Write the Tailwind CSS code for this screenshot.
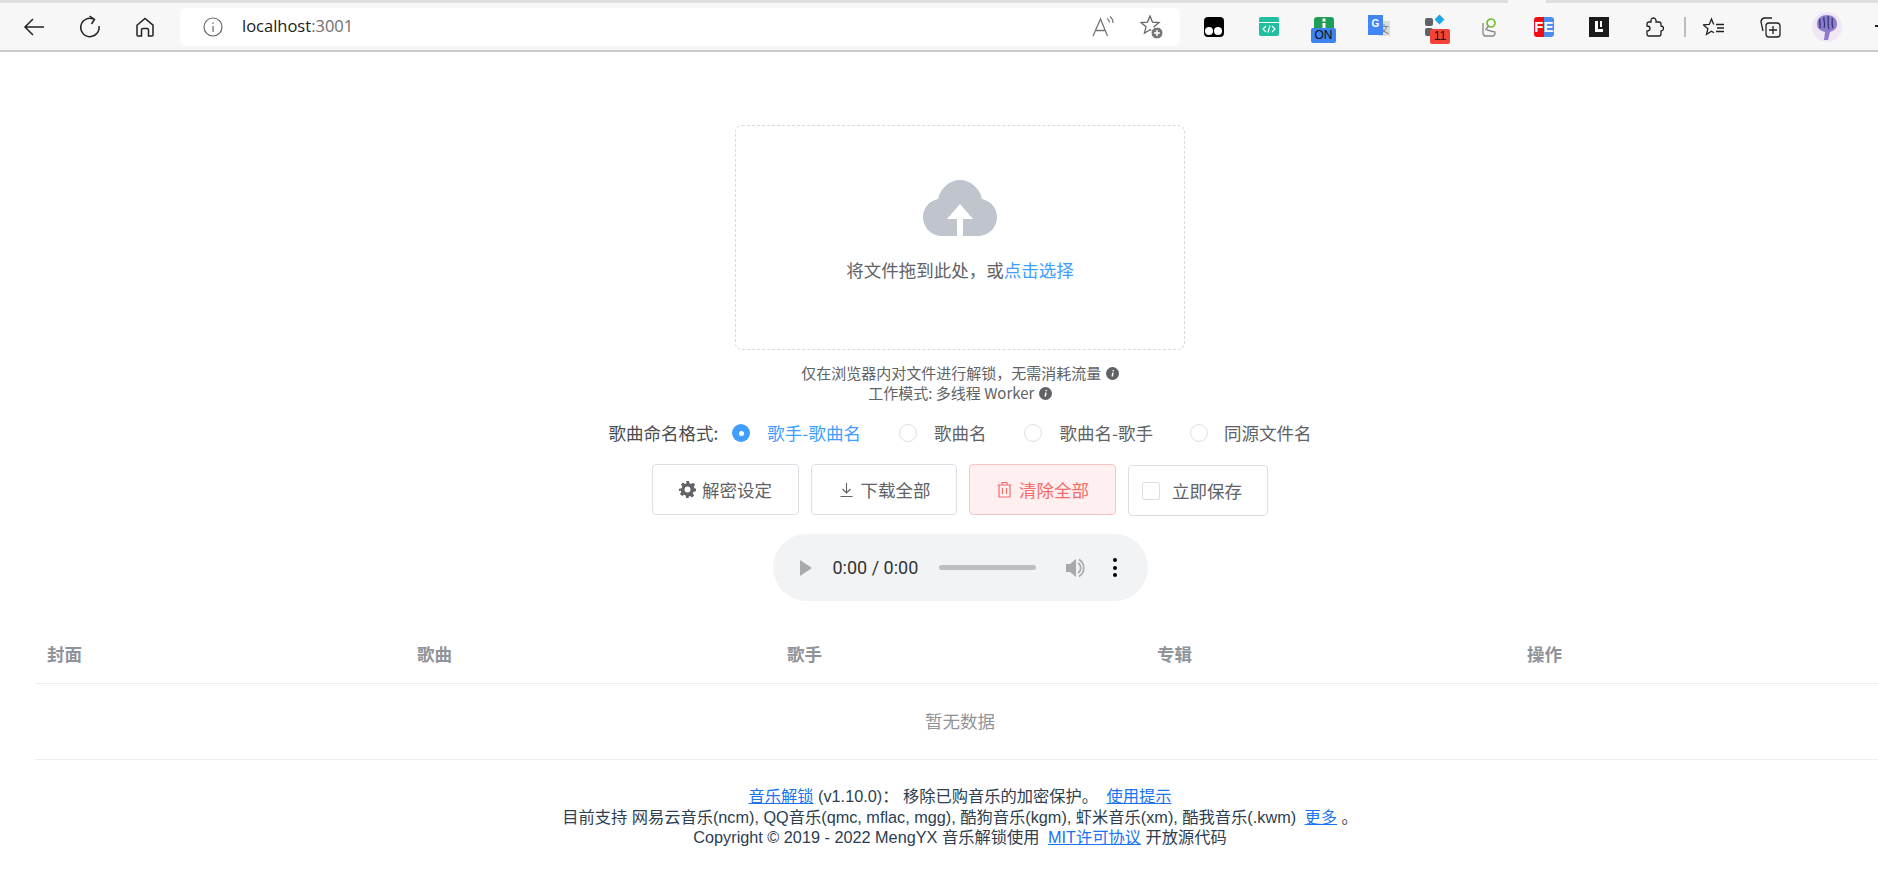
<!DOCTYPE html>
<html lang="zh-CN">
<head>
  <meta charset="UTF-8" />
  <title>音乐解锁</title>
  <script src="https://cdn.jsdelivr.net/npm/@tailwindcss/browser@4"></script>
</head>
<body class="w-[1878px] h-[887px] overflow-hidden bg-white font-['Noto_Sans_CJK_SC',sans-serif] text-[#606266]">
  <!-- browser chrome -->
  <header class="h-[52px] bg-[#f7f7f7] border-b-2 border-[#c9c9c9] flex flex-col relative">
    <div class="h-[3px] flex shrink-0">
      <div class="w-[1508px] bg-[#dedede]"></div>
      <div class="w-[38px]"></div>
      <div class="flex-1 bg-[#dedede]"></div>
    </div>
    <div class="flex-1 flex items-center text-[#222]">
      <button class="w-[34px] ml-[17px] flex justify-center">
        <svg width="24" height="24" viewBox="0 0 24 24" fill="none" stroke="#222" stroke-width="1.5"><path d="M22 12H3M11 4l-8 8 8 8"/></svg>
      </button>
      <button class="w-[34px] ml-[22px] flex justify-center">
        <svg width="24" height="24" viewBox="0 0 24 24" fill="none" stroke="#222" stroke-width="1.5"><path d="M16 4.200A9.200 9.200 0 1 0 21 11"/><path d="M11.500 1l5 3.400-3 4.600"/></svg>
      </button>
      <button class="w-[34px] ml-[21px] flex justify-center">
        <svg width="22" height="22" viewBox="0 0 22 22" fill="none" stroke="#222" stroke-width="1.5"><path d="M3 9.200L11 2.500l8 6.700V19a1 1 0 0 1-1 1h-3.500v-6a1.500 1.500 0 0 0-1.500-1.500H9A1.500 1.500 0 0 0 7.500 14v6H4a1 1 0 0 1-1-1z"/></svg>
      </button>
      <div class="ml-[18px] w-[1000px] h-[38px] bg-white rounded-[6px] flex items-center pl-[23px] pr-[16px]">
        <svg width="20" height="20" viewBox="0 0 20 20" fill="none" stroke="#666" stroke-width="1.2"><circle cx="10" cy="10" r="9"/><path d="M10 9v6M10 5.500v1.500"/></svg>
        <span class="ml-[19px] font-['Open_Sans',sans-serif] text-[16.500px] text-[#222]">localhost<span class="text-[#707070]">:3001</span></span>
        <div class="ml-auto flex items-center gap-[26px]">
          <svg width="22" height="22" viewBox="0 0 22 22" fill="none" stroke="#777" stroke-width="1.3"><path d="M1 20L8.500 3l7 17M4 14.500h9.500M15 2.500a5 5 0 0 1 2.500 4M18 .5a8 8 0 0 1 3 6.500"/></svg>
          <svg width="24" height="24" viewBox="0 0 24 24" fill="none" stroke="#666" stroke-width="1.300"><path d="M10 1L12.470 7.100 19.030 7.560 14 11.800 15.580 18.190 10 14.700 4.420 18.190 6 11.800 .97 7.560 7.530 7.100z"/><circle cx="17" cy="18" r="6" fill="#777" stroke="#fff" stroke-width="1"/><path d="M17 15v6M14 18h6" stroke="#fff" stroke-width="1.500"/></svg>
        </div>
      </div>
      <div class="ml-[6px] flex items-center">
        <div class="w-[55px] flex justify-center">
          <div class="w-[20px] h-[20px] bg-black rounded-[4px] flex items-end justify-center gap-px pb-[2px]"><span class="w-[8px] h-[8px] rounded-full bg-white"></span><span class="w-[8px] h-[8px] rounded-full bg-white"></span></div>
        </div>
        <div class="w-[55px] flex justify-center">
          <svg width="20" height="19" viewBox="0 0 20 19"><rect width="20" height="19" rx="2" fill="#1fbf9f"/><path d="M0 5.500h20" stroke="#f7f7f7"/><path d="M7 9l-3 3 3 3M13 9l3 3-3 3M11 8.500l-2 7" stroke="#fff" fill="none" stroke-width="1.200"/></svg>
        </div>
        <div class="w-[55px] flex justify-center relative h-[30px] pt-[5px]">
          <svg width="20" height="14" viewBox="0 0 20 14"><path d="M3 0h14a3 3 0 0 1 3 3v11H0V3a3 3 0 0 1 3-3z" fill="#1e9e56"/><path d="M8.500 6h3v8h-3zM8.500 1.500h3v3h-3z" fill="#fff"/></svg>
          <span class="absolute left-[15px] top-[16px] w-[25px] h-[15px] rounded-[2px] bg-[#3f83f0] text-[#111] text-[12px] leading-[15px] text-center font-['Liberation_Sans',sans-serif]">ON</span>
        </div>
        <div class="w-[55px] flex justify-center relative h-[24px]">
          <span class="absolute left-[27px] top-[6px] w-[12px] h-[15px] bg-[#dcdcdc] text-[#777] text-[10px] leading-[15px] text-center">文</span>
          <span class="absolute left-[17px] top-0 w-[15px] h-[20px] bg-[#4285f4] text-white text-[10px] leading-[17px] text-center font-bold font-['Liberation_Sans',sans-serif]">G</span>
        </div>
        <div class="w-[55px] flex justify-center relative h-[30px]">
          <div class="w-[20px] h-[24px] relative">
            <span class="absolute left-[1px] top-[6px] w-[8px] h-[8px] rounded-[2px] bg-[#5f6368]"></span>
            <span class="absolute left-[1px] top-[16px] w-[8px] h-[8px] rounded-[2px] bg-[#5f6368]"></span>
            <span class="absolute left-[12px] top-[4px] w-[7px] h-[7px] rotate-45 bg-[#1ea7e8]"></span>
          </div>
          <span class="absolute left-[24px] top-[17px] w-[20px] h-[15px] rounded-[2px] bg-[#f44336] text-[#111] text-[12px] leading-[15px] text-center font-['Liberation_Sans',sans-serif]">11</span>
        </div>
        <div class="w-[55px] flex justify-center">
          <svg width="16" height="20" viewBox="0 0 16 20" fill="none"><circle cx="10" cy="6" r="4" stroke="#6fbf2f" stroke-width="1.700"/><path d="M7.500 9L4.500 13M2 6v11l1.500 2h9l1.500-2v-2L6 13" stroke="#888" stroke-width="1.300"/></svg>
        </div>
        <div class="w-[55px] flex justify-center">
          <div class="w-[20px] h-[20px] rounded-[3px] overflow-hidden flex font-['Liberation_Sans',sans-serif] font-bold text-white text-[15px] leading-[20px]"><span class="w-[10px] bg-[#f00f14] text-right">F</span><span class="w-[10px] bg-[#4a8ff0] text-left">E</span></div>
        </div>
        <div class="w-[55px] flex justify-center">
          <div class="w-[20px] h-[20px] bg-[#1b1b1b] flex items-center justify-center"><svg width="10" height="11" viewBox="0 0 10 11" fill="#fff"><path d="M1 0h3v8h5v3H1zM6 0h2v6H6z"/></svg></div>
        </div>
        <div class="w-[55px] flex justify-center">
          <svg width="20" height="20" viewBox="0 0 20 20" fill="none" stroke="#222" stroke-width="1.300"><path d="M7 3.500C7 1.500 8.500 1 9.500 1S12 2 12 3.500V5h3c1 0 2 1 2 2v2c2 0 2.500 1.500 2.500 2.500S18.500 14 17 14v3c0 1-1 2-2 2H5c-1 0-2-1-2-2v-3c1.500 0 3-1 3-2.500S4.500 9 3 9V7c0-1 1-2 2-2h2z"/></svg>
        </div>
        <span class="ml-[3px] w-[2px] h-[20px] bg-[#bdbdbd]"></span>
        <div class="w-[55px] flex justify-center">
          <svg width="22" height="20" viewBox="0 0 22 20" fill="none" stroke="#222" stroke-width="1.300"><path d="M10.700 7.400L8.500 2 6.300 7.400 .4 7.900 4.900 11.700 3.500 17.400 8.500 14.300 11 15.800M13 7.500h8M14 11h7M13 14.500h8"/></svg>
        </div>
        <div class="w-[55px] flex justify-center ml-[1px]">
          <svg width="22" height="22" viewBox="0 0 22 22" fill="none" stroke="#222" stroke-width="1.300"><path d="M13 2H5a4 4 0 0 0-3 4l2 9"/><rect x="7" y="7" width="14" height="14" rx="3"/><path d="M14 10v8M10 14h8"/></svg>
        </div>
        <div class="w-[55px] flex justify-center ml-[2px]">
          <svg width="30" height="30" viewBox="0 0 30 30" fill="none"><circle cx="15" cy="15" r="15" fill="#efe6f6"/><path d="M5 12c0-6 5-9 10-9s10 3 10 9c0 5-4 7-7 8l-2 8h-4l1-8c-4-1-8-3-8-8z" fill="#8d7ccc"/><path d="M8 7c-1 4 1 6 0 9M12 5c-1 4 2 7 0 11M16 4c1 4-1 8 1 13M20 6c1 4-1 6 1 10" stroke="#2f2f70" stroke-width="1.200"/></svg>
        </div>
      </div>
    </div>
    <span class="absolute right-[0px] top-[25px] w-[3px] h-[2px] bg-[#222]"></span>
  </header>

  <main class="w-[1920px] flex flex-col items-center pt-[73px]">
    <div class="w-[450px] h-[225px] border border-dashed border-[#d9d9d9] rounded-[7px] flex flex-col items-center">
      <svg class="mt-[54px]" width="74" height="56" viewBox="0 0 74 56">
        <path d="M19 56C8 56 0 47 0 37c0-9 6-16 15-18C17 8 27 0 37 0s20 8 22 19c9 2 15 9 15 18 0 10-8 19-19 19z" fill="#c0c4cc"/>
        <path d="M37 24l13 15h-10v17h-6V39H24z" fill="#fff"/>
      </svg>
      <div class="mt-[19px] text-[17.500px] leading-[29px]">将文件拖到此处，或<span class="text-[#409eff]">点击选择</span></div>
    </div>

    <div class="mt-[13px] text-[15px] leading-[20px] text-center">
      <div>仅在浏览器内对文件进行解锁，无需消耗流量 <svg class="inline align-[-1px] ml-[1px]" width="13" height="13" viewBox="0 0 13 13"><circle cx="6.500" cy="6.500" r="6.500" fill="#606266"/><path d="M7 5.500l-.8 4M7.300 3v1.200" stroke="#fff" stroke-width="1.500"/></svg></div>
      <div>工作模式: 多线程 Worker <svg class="inline align-[-1px] ml-[1px]" width="13" height="13" viewBox="0 0 13 13"><circle cx="6.500" cy="6.500" r="6.500" fill="#606266"/><path d="M7 5.500l-.8 4M7.300 3v1.200" stroke="#fff" stroke-width="1.500"/></svg></div>
    </div>

    <div class="mt-[18px] flex items-center text-[17.500px] leading-[24px] h-[24px]">
      <span class="text-[#4a4c50]">歌曲命名格式:</span>
      <span class="ml-[14px] w-[18px] h-[18px] rounded-full bg-[#409eff] flex items-center justify-center"><span class="w-[5px] h-[5px] rounded-full bg-white"></span></span>
      <span class="ml-[17px] text-[#409eff]">歌手-歌曲名</span>
      <span class="ml-[38px] w-[18px] h-[18px] rounded-full border border-[#dcdfe6]"></span>
      <span class="ml-[17px]">歌曲名</span>
      <span class="ml-[38px] w-[18px] h-[18px] rounded-full border border-[#dcdfe6]"></span>
      <span class="ml-[17px]">歌曲名-歌手</span>
      <span class="ml-[37px] w-[18px] h-[18px] rounded-full border border-[#dcdfe6]"></span>
      <span class="ml-[16px]">同源文件名</span>
    </div>

    <div class="mt-[19px] flex items-start gap-[12px] text-[17.500px] leading-[24px]">
      <button class="w-[147px] h-[51px] border border-[#dcdfe6] rounded-[4px] flex items-center justify-center gap-[6px]">
        <svg width="17" height="17" viewBox="0 0 17 17"><path fill="#606266" fill-rule="evenodd" d="M7 0h3l.5 2.300 1.600.7 2-1.300 2 2-1.300 2 .7 1.600L17 7.700v2.600l-2.500.5-.7 1.600 1.300 2-2 2-2-1.300-1.600.7L9.900 17H7.100l-.5-2.500-1.600-.7-2 1.300-2-2 1.300-2-.7-1.600L0 10.300V7.700l2.600-.5.7-1.600-1.300-2 2-2 2 1.300 1.600-.7zM8.500 5.500a3 3 0 1 0 0 6 3 3 0 0 0 0-6z"/></svg>
        解密设定
      </button>
      <button class="w-[146px] h-[51px] border border-[#dcdfe6] rounded-[4px] flex items-center justify-center gap-[6px]">
        <svg width="17" height="17" viewBox="0 0 17 17" fill="none" stroke="#606266" stroke-width="1.100"><path d="M8.500 2v10M4.500 8l4 4 4-4M2.500 15.500h12"/></svg>
        下载全部
      </button>
      <button class="w-[147px] h-[51px] border border-[#fbc4c4] bg-[#fef0f0] text-[#f56c6c] rounded-[4px] flex items-center justify-center gap-[6px]">
        <svg width="17" height="17" viewBox="0 0 17 17" fill="none" stroke="#f56c6c" stroke-width="1.200"><path d="M1.500 4h14M6 4V1.500h5V4M3 4v12h11V4M6.500 7v6M10.500 7v6"/></svg>
        清除全部
      </button>
      <button class="mt-[1px] w-[140px] h-[51px] border border-[#dcdfe6] rounded-[4px] flex items-center pl-[13px]">
        <span class="w-[18px] h-[18px] border border-[#dcdfe6] rounded-[2px]"></span>
        <span class="ml-[12px]">立即保存</span>
      </button>
    </div>

    <div class="mt-[18px] w-[375px] h-[67px] rounded-full bg-[#f1f3f4] flex items-center text-[#222]">
      <svg class="ml-[27px]" width="12" height="16" viewBox="0 0 12 16"><path d="M0 0l12 8-12 8z" fill="#a8a9aa"/></svg>
      <span class="ml-[21px] font-['Roboto',sans-serif] text-[18px] text-[#333]">0:00 / 0:00</span>
      <span class="ml-[21px] w-[97px] h-[5px] rounded-full bg-[#bdbebf]"></span>
      <svg class="ml-[30px]" width="20" height="20" viewBox="0 0 20 20"><path d="M0 6h4l6-5v18l-6-5H0z" fill="#a8a9aa"/><path d="M12 5a6 6 0 0 1 0 10M13 1.500a10 10 0 0 1 0 17" fill="none" stroke="#a8a9aa" stroke-width="1.600"/></svg>
      <span class="ml-[27px] flex flex-col gap-[3.500px]"><span class="w-[4px] h-[4px] rounded-full bg-black"></span><span class="w-[4px] h-[4px] rounded-full bg-black"></span><span class="w-[4px] h-[4px] rounded-full bg-black"></span></span>
    </div>

    <div class="mt-[24px] w-[1850px] text-[17.500px]">
      <div class="grid grid-cols-5 h-[59px] border-b border-[#ebeef5] items-center font-bold text-[#909399] leading-[24px]">
        <div class="pl-[12px]">封面</div>
        <div class="pl-[12px]">歌曲</div>
        <div class="pl-[12px]">歌手</div>
        <div class="pl-[12px]">专辑</div>
        <div class="pl-[12px]">操作</div>
      </div>
      <div class="h-[76px] border-b border-[#ebeef5] flex items-center justify-center text-[#909399]">暂无数据</div>
    </div>

    <footer class="mt-[26px] text-center text-[16.250px] leading-[20.500px] text-[#2c3e50] font-['Liberation_Sans','Noto_Sans_CJK_SC',sans-serif]">
      <div><a class="underline text-[#1a73f0]" href="#">音乐解锁</a> (v1.10.0)： 移除已购音乐的加密保护。 <a class="ml-1 underline text-[#1a73f0]" href="#">使用提示</a></div>
      <div>目前支持 网易云音乐(ncm), QQ音乐(qmc, mflac, mgg), 酷狗音乐(kgm), 虾米音乐(xm), 酷我音乐(.kwm) <a class="ml-1 underline text-[#1a73f0]" href="#">更多</a> 。</div>
      <div>Copyright © 2019 - 2022 MengYX 音乐解锁使用 <a class="ml-1 underline text-[#1a73f0]" href="#">MIT许可协议</a> 开放源代码</div>
    </footer>
  </main>
</body>
</html>
